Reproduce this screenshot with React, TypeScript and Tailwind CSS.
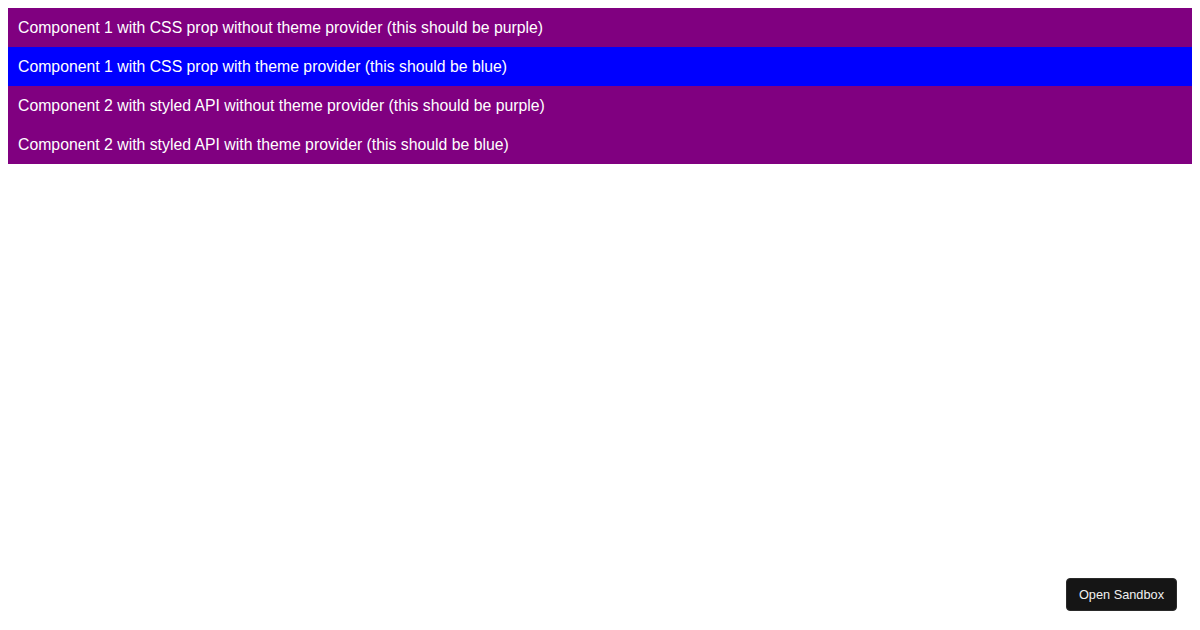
export default function App() {
  const rows = [
    { t: "Component 1 with CSS prop without theme provider (this should be purple)", c: "bg-[#800080]" },
    { t: "Component 1 with CSS prop with theme provider (this should be blue)", c: "bg-[#0000ff]" },
    { t: "Component 2 with styled API without theme provider (this should be purple)", c: "bg-[#800080]" },
    { t: "Component 2 with styled API with theme provider (this should be blue)", c: "bg-[#800080]" },
  ];
  return (
    <div className="relative w-[1200px] h-[630px] bg-white p-2 font-['Liberation_Sans',Arial,sans-serif]">
      <div className="flex flex-col">
        {rows.map((r, i) => (
          <div key={i} className={`${r.c} h-[39px] flex items-center px-[10px] text-white text-[15.8px]`}>
            {r.t}
          </div>
        ))}
      </div>
      <div className="absolute right-[23px] bottom-[19px] w-[111px] h-[33px] rounded-[4px] bg-[#151515] border border-[#2a2a2a] flex items-center justify-center pt-[1px] text-[#f0f0f0] text-[12.75px] font-['Liberation_Sans',Arial,sans-serif]">
        Open Sandbox
      </div>
    </div>
  );
}
